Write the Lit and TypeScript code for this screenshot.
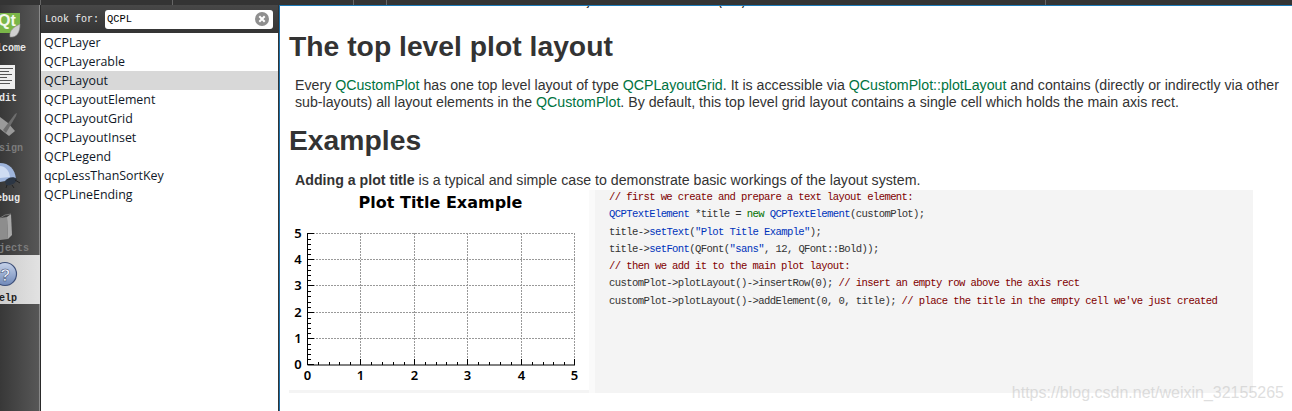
import { LitElement, html, css, svg } from "lit";
import { customElement } from "lit/decorators.js";

const items = ["QCPLayer","QCPLayerable","QCPLayout","QCPLayoutElement","QCPLayoutGrid","QCPLayoutInset","QCPLegend","qcpLessThanSortKey","QCPLineEnding"];

const qt = svg`<svg width="40" height="38" viewBox="0 0 40 38"><path d="M0 8 H20 V22 L15 28 H0Z" fill="#7ab648"/><text x="-2" y="21" font-family="Liberation Sans" font-weight="700" font-size="16" fill="#f4f9ec">Qt</text><path d="M10 32 C9 25 14 22 20 19 C20 27 17 33 10 32Z" fill="#cfcfcf" stroke="#8a8a8a" stroke-width=".6"/></svg>`;
const edit = svg`<svg width="40" height="38" viewBox="0 0 40 38"><rect x="0" y="10" width="15" height="24" fill="#efefef"/><path d="M0 13.5H13M0 16.5H9M0 19.5H12M0 22.5H7M0 25.5H12M0 28.5H10" stroke="#555" stroke-width="1"/></svg>`;
const design = svg`<svg width="40" height="38" viewBox="0 0 40 38"><path d="M0 12 L8 18 L15 26 L9 31 L0 24Z" fill="#9a9a9a"/><path d="M3 25 L15 9 L17 8 L16 11 L6 28Z" fill="#6d6d6d"/></svg>`;
const bug = svg`<svg width="40" height="38" viewBox="0 0 40 38"><path d="M0 8 C9 8 15 14 16 24 L0 27Z" fill="#9fb5dc"/><path d="M0 11 C5 11 9 15 10 22 L0 23Z" fill="#cfdcf2"/><path d="M5 26 C8 22 14 21 17 24 C16 29 10 31 6 30Z" fill="#2c3644"/><path d="M15 25L20 28M12 30L14 33M7 30L6 33" stroke="#222"/></svg>`;
const proj = svg`<svg width="40" height="38" viewBox="0 0 40 38"><path d="M0 13 L7 12 L8 34 L0 35Z" fill="#8d8d8d"/><path d="M7 12 L11 9 L12 30 L8 34Z" fill="#a9a9a9"/><path d="M0 13 L5 10 L11 9" fill="none" stroke="#777"/></svg>`;
const help = svg`<svg width="40" height="38" viewBox="0 0 40 38"><defs><linearGradient id="h" x1="0" y1="0" x2="0" y2="1"><stop offset="0" stop-color="#c6d3ea"/><stop offset="1" stop-color="#6f88b8"/></linearGradient></defs><circle cx="5" cy="19" r="11.5" fill="url(#h)" stroke="#3d4f78" stroke-width="1.2"/><text x="0" y="25.5" font-family="Liberation Sans" font-weight="700" font-size="17" fill="#f0f4ff" stroke="#35466c" stroke-width=".5">?</text></svg>`;

const modes = [["Welcome", qt, ""],["Edit", edit, ""],["Design", design, "dim"],["Debug", bug, ""],["Projects", proj, "dim"],["Help", help, "on"]] as const;

const xTicks = [0,1,2,3,4,5];

function plot() {
  const xs = [18.5, 71.5, 125.5, 178.5, 232.5, 285.5];
  const ys = [174.5, 148.5, 122.5, 95.5, 69.5, 43.5];
  const minorX: number[] = [];
  for (let i = 0; i < 5; i++) for (let j = 1; j < 5; j++) minorX.push(Math.round(xs[i] + (xs[i+1]-xs[i])*j/5) + .5);
  const minorY: number[] = [];
  for (let i = 0; i < 5; i++) for (let j = 1; j < 5; j++) minorY.push(Math.round(ys[i] + (ys[i+1]-ys[i])*j/5) + .5);
  return svg`<svg width="300" height="200" viewBox="0 0 300 200">
    <text x="151.5" y="17.5" text-anchor="middle" class="pt">Plot Title Example</text>
    ${xs.slice(1).map(x => svg`<line x1=${x} x2=${x} y1="43" y2="174" stroke="#999" stroke-dasharray="2 1"/>`)}
    ${ys.slice(1).map(y => svg`<line x1="18" x2="286" y1=${y} y2=${y} stroke="#999" stroke-dasharray="2 1"/>`)}
    <path d="M18.5 43 V175 H286" fill="none" stroke="#000" stroke-width="1"/>
    ${xs.map(x => svg`<line x1=${x} x2=${x} y1="175" y2="169" stroke="#000"/>`)}
    ${ys.map(y => svg`<line x1="18" x2="25" y1=${y} y2=${y} stroke="#000"/>`)}
    ${minorX.map(x => svg`<line x1=${x} x2=${x} y1="175" y2="172" stroke="#000"/>`)}
    ${minorY.map(y => svg`<line x1="18" x2="22" y1=${y} y2=${y} stroke="#000"/>`)}
    ${xTicks.map((t,i) => svg`<text x=${xs[i]} y="190" text-anchor="middle" class="tk">${t}</text>`)}
    ${xTicks.map((t,i) => svg`<text x="9" y=${ys[i]+4.5} text-anchor="middle" class="tk">${t}</text>`)}
  </svg>`;
}

@customElement("app-root")
export class AppRoot extends LitElement {
  static styles = css`
    :host { display: block; width: 1292px; height: 411px; overflow: hidden; position: relative; background: #fff; font-family: "Liberation Sans", sans-serif; }
    .top { height: 5px; background: #343434; display: flex; box-sizing: border-box; }
    .top i { display: block; border-right: 1px solid #666; height: 5px; flex: none; }
    .main { display: flex; height: 406px; }
    .rail { width: 40px; flex: none; overflow: hidden; background: linear-gradient(90deg, #383838, #585858); border-right: 1px solid #2a2a2a; box-shadow: inset -1px 0 #8a8a8a; }
    .mode { width: 70px; margin-left: -30px; height: 50px; display: flex; flex-direction: column; align-items: center; justify-content: flex-start; box-sizing: border-box; font: bold 10px/11px "Liberation Mono", monospace; color: #e8e8e8; }
    .mode svg { display: block; margin-left: 30px; width: 40px; height: 38px; flex: none; }
    .mode.dim { color: #7c7c7c; }
    .mode.on { background: linear-gradient(90deg, #bdbdbd, #e2e2e2); color: #222; height: 49px; }
    .panel { width: 237px; flex: none; display: flex; flex-direction: column; background: #fff; }
    .search { height: 28px; flex: none; background: linear-gradient(#484848, #343434); display: flex; align-items: center; padding: 0 5px 0 4px; gap: 5px; box-sizing: border-box; }
    .search label { font: 10px "Liberation Mono", monospace; color: #eee; white-space: nowrap; width: 55px; flex: none; }
    .input { flex: 1; height: 19px; background: #fff; border-radius: 3px; display: flex; align-items: center; justify-content: space-between; padding: 0 4px 0 2px; box-sizing: border-box; font: 10.4px "Liberation Mono", monospace; color: #000; }
    .x { width: 14px; height: 14px; }
    .row { height: 19px; padding-left: 3px; font: 12.4px/19px "Open Sans", sans-serif; color: #101828; }
    .row.sel { background: #d8d8d8; }
    .sep { width: 1px; flex: none; background: #333; }
    .content { flex: 1; min-width: 0; border-left: 1px solid #1c6fa8; border-top: 1px solid #1c7ab8; overflow: hidden; }
    .clip { height: 2px; overflow: hidden; position: relative; }
    .clip span { position: absolute; bottom: 0; font-size: 14px; line-height: 14px; color: #222; white-space: pre; }
    .doc { padding: 0 0 0 9px; }
    h1 { margin: 22px 0 0; font: bold 28.3px/33px "Liberation Sans", sans-serif; color: #333; }
    h2 { margin: 13px 0 0; font: bold 28.3px/33px "Liberation Sans", sans-serif; color: #333; }
    p { margin: 0; padding-left: 6px; font: 14.18px/17px "Liberation Sans", sans-serif; color: #333; width: 1000px; }
    .p1 { margin-top: 14px; }
    .p2 { margin-top: 15px; }
    a { color: #00733f; }
    .fig { display: flex; align-items: stretch; height: 203px; margin-top: 1px; }
    .plotbox { width: 300px; flex: none; background: #fff; height: 203px; border-bottom: 3px solid #f4f4f4; box-sizing: border-box; }
    .plotbox svg { display: block; }
    .gap { width: 6px; flex: none; background: #fafafa; }
    .pt { font: bold 16px "DejaVu Sans", sans-serif; fill: #000; }
    .tk { font: 600 13px "Noto Sans", sans-serif; fill: #000; }
    .code { width: 658px; background: #f4f4f4; flex: none; box-sizing: border-box; padding: 0 0 0 14px; font: 10.6px/17.3px "Liberation Mono", monospace; letter-spacing: -.62px; color: #333; white-space: pre; }
    .lines { margin-top: -1px; }
    .c { color: #800000; }
    .t { color: #0033bb; }
    .k { color: #007000; }
    .wm { position: absolute; right: 8px; top: 384px; font: 16px "Liberation Sans", sans-serif; color: rgba(190,190,190,.5); }
  `;

  render() {
    return html`
      <div class="top"><i style="width:40px"></i><i style="width:131px"></i><i style="width:180px"></i><i style="width:32px"></i><i style="width:658px"></i></div>
      <div class="main">
        <div class="rail">
          ${modes.map(([n, ic, c]) => html`<div class="mode ${c}">${ic}<span>${n}</span></div>`)}
        </div>
        <div class="panel">
          <div class="search">
            <label>Look for:</label>
            <div class="input"><span>QCPL</span>
              <svg class="x" viewBox="0 0 14 14"><circle cx="7" cy="7" r="7" fill="#8f8f8f"/><path d="M4.3 4.3L9.7 9.7M9.7 4.3L4.3 9.7" stroke="#fff" stroke-width="2"/></svg>
            </div>
          </div>
          ${items.map((t) => html`<div class="row ${t === "QCPLayout" ? "sel" : ""}">${t}</div>`)}
        </div>
        <div class="sep"></div>
        <div class="content">
          <div class="clip"><span style="left:305px">y</span><span style="left:438px">(</span><span style="left:461px">)</span></div>
          <div class="doc">
            <h1>The top level plot layout</h1>
            <p class="p1">Every <a>QCustomPlot</a> has one top level layout of type <a>QCPLayoutGrid</a>. It is accessible via <a>QCustomPlot::plotLayout</a> and contains (directly or indirectly via other sub-layouts) all layout elements in the <a>QCustomPlot</a>. By default, this top level grid layout contains a single cell which holds the main axis rect.</p>
            <h2>Examples</h2>
            <p class="p2"><b>Adding a plot title</b> is a typical and simple case to demonstrate basic workings of the layout system.</p>
            <div class="fig">
              <div class="plotbox">${plot()}</div>
              <div class="gap"></div>
              <div class="code"><div class="lines"><span class="c">// first we create and prepare a text layout element:</span>
<span class="t">QCPTextElement</span> *title = <span class="k">new</span> <span class="t">QCPTextElement</span>(customPlot);
title-&gt;<span class="t">setText</span>(<span class="t">"Plot Title Example"</span>);
title-&gt;<span class="t">setFont</span>(QFont(<span class="t">"sans"</span>, 12, QFont::Bold));
<span class="c">// then we add it to the main plot layout:</span>
customPlot-&gt;plotLayout()-&gt;insertRow(0); <span class="c">// insert an empty row above the axis rect</span>
customPlot-&gt;plotLayout()-&gt;addElement(0, 0, title); <span class="c">// place the title in the empty cell we've just created</span></div></div>
            </div>
          </div>
        </div>
      </div>
      <div class="wm">https://blog.csdn.net/weixin_32155265</div>
    `;
  }
}
